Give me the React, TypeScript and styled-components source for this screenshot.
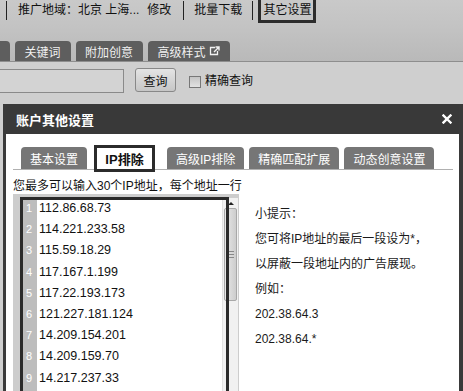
import styled, { createGlobalStyle } from "styled-components";

const GlobalStyle = createGlobalStyle`
  html, body {
    margin: 0;
    padding: 0;
  }
  body {
    width: 463px;
    height: 391px;
    overflow: hidden;
    background: #cfcfcf;
    font-family: "Liberation Sans", "Noto Sans CJK SC", sans-serif;
    font-size: 12px;
    color: #111;
  }
`;

const ipList = [
  "112.86.68.73",
  "114.221.233.58",
  "115.59.18.29",
  "117.167.1.199",
  "117.22.193.173",
  "121.227.181.124",
  "14.209.154.201",
  "14.209.159.70",
  "14.217.237.33",
];

const tips = [
  "小提示：",
  "您可将IP地址的最后一段设为*，",
  "以屏蔽一段地址内的广告展现。",
  "例如：",
  "202.38.64.3",
  "202.38.64.*",
];

const ExternalIcon = () => (
  <svg width="11" height="10" viewBox="0 0 11 10">
    <path d="M6 1.5H1.5v7h7V5" fill="none" stroke="#f2f2f2" strokeWidth="1.3" />
    <path d="M5 6l4.5-4.5M6.5 1h3.5v3.5" fill="none" stroke="#f2f2f2" strokeWidth="1.4" />
  </svg>
);

const CloseIcon = () => (
  <svg width="10" height="10" viewBox="0 0 10 10">
    <path d="M1.5 1.5l7 7M8.5 1.5l-7 7" stroke="#fff" strokeWidth="2.4" strokeLinecap="square" />
  </svg>
);

const App = () => {
  return (
    <>
      <GlobalStyle />
      <Page>
        <TopBar>
          <Sep />
          <BarItem $pad="0 12px 0 11px">
            推广地域：北京 上海...<EditLink>修改</EditLink>
          </BarItem>
          <Sep />
          <BarItem $pad="0 10px">批量下载</BarItem>
          <Sep />
          <BoxedItem>其它设置</BoxedItem>
        </TopBar>

        <TabStrip>
          <PageTab $cut />
          <PageTab>关键词</PageTab>
          <PageTab>附加创意</PageTab>
          <PageTab>
            高级样式
            <ExternalIcon />
          </PageTab>
        </TabStrip>

        <SearchRow>
          <SearchInput type="text" />
          <SearchButton>查询</SearchButton>
          <CheckBox />
          <CheckLabel>精确查询</CheckLabel>
        </SearchRow>

        <Dialog>
          <DialogHeader>
            <DialogTitle>账户其他设置</DialogTitle>
            <CloseIcon />
          </DialogHeader>
          <DialogBody>
            <DialogTabs>
              <DialogTab>基本设置</DialogTab>
              <DialogTab $active>IP排除</DialogTab>
              <DialogTab>高级IP排除</DialogTab>
              <DialogTab>精确匹配扩展</DialogTab>
              <DialogTab>动态创意设置</DialogTab>
            </DialogTabs>

            <Hint>您最多可以输入30个IP地址，每个地址一行</Hint>

            <Content>
              <Editor>
                <Gutter>
                  {ipList.map((_, i) => (
                    <LineNo key={i}>{i + 1}</LineNo>
                  ))}
                </Gutter>
                <Lines>
                  {ipList.map((ip) => (
                    <Line key={ip}>{ip}</Line>
                  ))}
                </Lines>
                <ScrollBar>
                  <UpArrow />
                  <Thumb>
                    <Grip />
                  </Thumb>
                </ScrollBar>
                <Marker />
              </Editor>

              <Tips>
                {tips.map((t) => (
                  <TipLine key={t}>{t}</TipLine>
                ))}
              </Tips>
            </Content>
          </DialogBody>
        </Dialog>
      </Page>
    </>
  );
};

export default App;

const Page = styled.div`
  width: 463px;
  height: 391px;
  overflow: hidden;
  background: #cfcfcf;
`;

const TopBar = styled.div`
  height: 27px;
  display: flex;
  align-items: flex-start;
  padding-left: 6px;
  background: linear-gradient(#c9c9c9, #c3c3c3);
`;

const Sep = styled.span`
  width: 1px;
  height: 19px;
  margin-top: 1px;
  background: #222;
`;

const BarItem = styled.span<{ $pad: string }>`
  padding: ${({ $pad }) => $pad};
  line-height: 20px;
  font-size: 12px;
  color: #111;
  white-space: nowrap;
`;

const EditLink = styled.span`
  margin-left: 8px;
`;

const BoxedItem = styled.span`
  margin-left: 5px;
  height: 23px;
  box-sizing: border-box;
  padding: 0 2px;
  border: 3px solid #2c2c2c;
  border-top: none;
  line-height: 20px;
  font-size: 12px;
  white-space: nowrap;
`;

const TabStrip = styled.div`
  height: 35px;
  box-sizing: border-box;
  display: flex;
  align-items: flex-end;
  gap: 5px;
  border-bottom: 1px solid #8e8e8e;
  background: linear-gradient(#c3c3c3, #b9b9b9);
`;

const PageTab = styled.div<{ $cut?: boolean }>`
  height: 20px;
  display: flex;
  align-items: center;
  gap: 3px;
  padding: ${({ $cut }) => ($cut ? "0" : "0 10px 0 9.5px")};
  width: ${({ $cut }) => ($cut ? "10px" : "auto")};
  background: #5e5e5e;
  color: #f0f0f0;
  font-size: 12px;
  border-radius: ${({ $cut }) => ($cut ? "0 4px 0 0" : "4px 4px 0 0")};
  white-space: nowrap;
`;

const SearchRow = styled.div`
  height: 42px;
  display: flex;
  align-items: flex-start;
  padding-top: 6px;
  box-sizing: border-box;
`;

const SearchInput = styled.input`
  width: 125px;
  height: 24px;
  margin: 1px 0 0 -1px;
  padding: 0;
  box-sizing: border-box;
  border: 1px solid #8a8a8a;
  background: #d3d3d3;
  outline: none;
`;

const SearchButton = styled.button`
  width: 41px;
  height: 24px;
  margin-left: 11px;
  padding: 0;
  border: 1px solid #888;
  border-radius: 3px;
  background: linear-gradient(#e4e4e4, #c6c6c6);
  font-family: "Liberation Sans", "Noto Sans CJK SC", sans-serif;
  font-size: 12px;
  color: #111;
`;

const CheckBox = styled.span`
  width: 12px;
  height: 12px;
  margin: 8px 0 0 13px;
  box-sizing: border-box;
  border: 1px solid #777;
  background: linear-gradient(#c4c4c4, #e2e2e2);
`;

const CheckLabel = styled.span`
  margin-left: 4px;
  line-height: 26px;
  font-size: 12px;
  color: #111;
`;

const Dialog = styled.div`
  margin-left: 3px;
  width: 460px;
  height: 300px;
  box-sizing: border-box;
  background: #fff;
  border-left: 3px solid #3a3a3a;
  border-right: 4px solid #3a3a3a;
`;

const DialogHeader = styled.div`
  height: 30px;
  display: flex;
  align-items: center;
  justify-content: space-between;
  padding: 0 7px 0 10px;
  background: #393939;
`;

const DialogTitle = styled.span`
  color: #fff;
  font-weight: bold;
  font-size: 13px;
`;

const DialogBody = styled.div`
  padding: 13px 6px 0 7px;
`;

const DialogTabs = styled.div`
  height: 23px;
  box-sizing: border-box;
  display: flex;
  align-items: flex-end;
  padding-left: 8px;
  border-bottom: 1px solid #b0b0b0;
`;

const DialogTab = styled.div<{ $active?: boolean }>`
  height: ${({ $active }) => ($active ? "27px" : "22px")};
  box-sizing: border-box;
  width: ${({ $active }) => ($active ? "61px" : "auto")};
  margin: ${({ $active }) => ($active ? "0 12px -3px 2px" : "0 5px 0 0")};
  padding: ${({ $active }) => ($active ? "0" : "0 9px")};
  display: flex;
  align-items: center;
  justify-content: center;
  background: ${({ $active }) => ($active ? "#fff" : "#767676")};
  color: ${({ $active }) => ($active ? "#111" : "#fff")};
  border: ${({ $active }) => ($active ? "3px solid #2b2b2b" : "none")};
  border-radius: ${({ $active }) => ($active ? "0" : "4px 4px 0 0")};
  font-size: ${({ $active }) => ($active ? "13px" : "12px")};
  font-weight: ${({ $active }) => ($active ? "bold" : "normal")};
  white-space: nowrap;
`;

const Hint = styled.div`
  margin-top: 8px;
  line-height: 16px;
  font-size: 12px;
  color: #111;
`;

const Content = styled.div`
  display: flex;
  align-items: flex-start;
`;

const Editor = styled.div`
  position: relative;
  width: 226px;
  height: 220px;
  box-sizing: border-box;
  display: flex;
  padding: 4px 1px 0 7px;
  background: #cdcdcd;
`;

const Gutter = styled.div`
  width: 17px;
  background: #bdbdbd;
`;

const LineNo = styled.div`
  height: 21.2px;
  line-height: 21.2px;
  padding-left: 6px;
  color: #fff;
  font-size: 11px;
`;

const Lines = styled.div`
  flex: 1;
  background: #fff;
  padding-left: 2px;
`;

const Line = styled.div`
  height: 21.2px;
  line-height: 21.2px;
  font-size: 12.5px;
  color: #111;
`;

const ScrollBar = styled.div`
  width: 16px;
  box-sizing: border-box;
  background: #f1f1f1;
  border-left: 1px solid #e2e2e2;
  display: flex;
  flex-direction: column;
  align-items: center;
`;

const UpArrow = styled.span`
  margin-top: 4px;
  width: 0;
  height: 0;
  border-left: 3px solid transparent;
  border-right: 3px solid transparent;
  border-bottom: 3px solid #222;
`;

const Thumb = styled.div`
  margin-top: 3px;
  width: 13px;
  height: 93px;
  box-sizing: border-box;
  border: 1px solid #a8a8a8;
  border-radius: 2px;
  background: linear-gradient(90deg, #e8e8e8, #cdcdcd);
  display: flex;
  align-items: center;
  justify-content: center;
`;

const Grip = styled.span`
  width: 6px;
  height: 5px;
  border-top: 1px solid #888;
  border-bottom: 1px solid #888;
  background: linear-gradient(#888, #888) center / 100% 1px no-repeat;
`;

/* annotation frame drawn over the editor in the screenshot */
const Marker = styled.div`
  position: absolute;
  left: 7px;
  top: 3px;
  width: 209px;
  height: 260px;
  box-sizing: border-box;
  border: 3px solid #2a2a2a;
  pointer-events: none;
`;

const Tips = styled.div`
  margin-left: 16px;
  padding-top: 8px;
`;

const TipLine = styled.div`
  line-height: 25px;
  font-size: 12px;
  color: #1a1a1a;
  white-space: nowrap;
`;
